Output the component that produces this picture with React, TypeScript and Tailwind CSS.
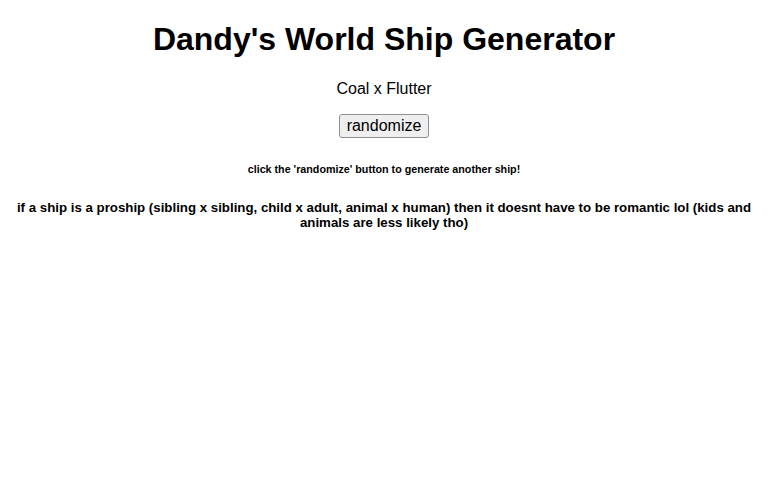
import { useState } from 'react';

const characters = ['Coal', 'Flutter', 'Dandy', 'Astro', 'Shrimpo', 'Vee', 'Pebble', 'Boxten', 'Poppy', 'Tisha'];

function pickShip() {
  const a = characters[Math.floor(Math.random() * characters.length)];
  let b = a;
  while (b === a) b = characters[Math.floor(Math.random() * characters.length)];
  return `${a} x ${b}`;
}

export default function App() {
  const [ship, setShip] = useState('Coal x Flutter');

  return (
    <div className="px-2 pt-[21px] text-center text-black font-['Liberation_Sans',Arial,sans-serif]">
      <h1 className="text-[32px] leading-[37px] font-bold">Dandy's World Ship Generator</h1>

      <p className="mt-[22px] text-base leading-[18px]">{ship}</p>

      <button
        onClick={() => setShip(pickShip())}
        className="mt-[16px] h-[24px] px-[7px] text-base leading-[18px] bg-[#efefef] border border-[#8f8f8f] rounded-[3px]"
      >
        randomize
      </button>

      <h6 className="mt-[25px] text-[10.72px] leading-[12px] font-bold">
        click the 'randomize' button to generate another ship!
      </h6>

      <h5 className="mt-[25px] text-[13.28px] leading-[15px] font-bold">
        if a ship is a proship (sibling x sibling, child x adult, animal x human) then it doesnt have to be romantic lol (kids and animals are less likely tho)
      </h5>
    </div>
  );
}
